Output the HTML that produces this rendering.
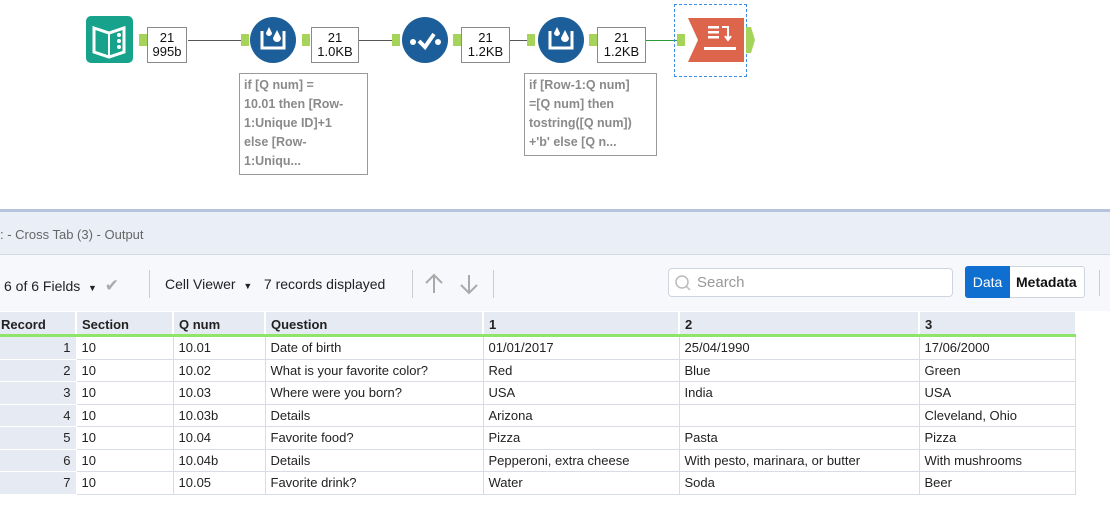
<!DOCTYPE html><html><head><style>
body{margin:0;width:1110px;height:520px;overflow:hidden;background:#fff;font-family:"Liberation Sans",sans-serif;position:relative}
.a{position:absolute}
.box{position:absolute;border:1px solid #8a8a8a;background:#fff;font-size:13px;line-height:14px;text-align:center;color:#111}
.ann{position:absolute;border:1px solid #999;background:#fff;color:#8a8a8a;font-size:12.5px;line-height:19px;padding:2px 4px;box-sizing:border-box;font-weight:bold}
.cn{position:absolute;width:8px;height:12px;background:#a6d35a}
.ln{position:absolute;height:1px;background:#555}
table{border-collapse:collapse;font-size:13px;color:#222;font-family:"Liberation Sans",sans-serif}
td{border:1px solid #d7dce5;height:21.5px;padding:0 5px;white-space:nowrap;overflow:hidden}
th{background:#e6ebf3;text-align:left;font-weight:bold;border-bottom:3px solid #8fe46a;border-left:2px solid #fff;height:20px;padding:2px 5px 0}
td.r{background:#e6ebf3;text-align:right;border-color:#fff}
</style></head><body>
<svg class="a" style="left:86px;top:16px" width="50" height="48" viewBox="0 0 50 48"><rect x="0" y="0" width="47" height="47" rx="5" fill="#17a38b"/><path d="M8 12 L23 17 L38 12 L38 36 L23 41 L8 36Z" fill="none" stroke="#fff" stroke-width="3"/><line x1="23" y1="17" x2="23" y2="40" stroke="#fff" stroke-width="2"/><circle cx="33" cy="19" r="2" fill="#fff"/><circle cx="33" cy="25" r="2" fill="#fff"/><circle cx="33" cy="31" r="2" fill="#fff"/></svg>
<div class="cn" style="left:139px;top:34px"></div>
<div class="box" style="left:147px;top:27px;width:40px;height:36px;padding-top:3px;box-sizing:border-box">21<br>995b</div>
<div class="ln" style="left:188px;top:40px;width:56px"></div>
<div class="cn" style="left:241px;top:34px"></div>
<svg class="a" style="left:249px;top:16px" width="48" height="48"><circle cx="24" cy="24" r="23" fill="#1c5e99"/><path d="M13 15 V32 H35 V15" fill="none" stroke="#fff" stroke-width="3"/><path d="M20 11 L23 17 A3 3 0 1 1 17 17Z M28 14 L32 22 A4 4 0 1 1 24 22Z" fill="#fff"/></svg>
<div class="cn" style="left:302px;top:34px"></div>
<div class="box" style="left:311px;top:27px;width:48px;height:36px;padding-top:3px;box-sizing:border-box">21<br>1.0KB</div>
<div class="ln" style="left:359px;top:40px;width:36px"></div>
<div class="cn" style="left:392px;top:34px"></div>
<svg class="a" style="left:401px;top:16px" width="48" height="48"><circle cx="24" cy="24" r="23" fill="#1c5e99"/><circle cx="12" cy="26" r="3" fill="#fff"/><circle cx="37" cy="26" r="3" fill="#fff"/><path d="M18 25 L24 31 L33 18" fill="none" stroke="#fff" stroke-width="4"/></svg>
<div class="cn" style="left:453px;top:34px"></div>
<div class="box" style="left:461px;top:27px;width:49px;height:36px;padding-top:3px;box-sizing:border-box">21<br>1.2KB</div>
<div class="ln" style="left:510px;top:40px;width:20px"></div>
<div class="cn" style="left:527px;top:34px"></div>
<svg class="a" style="left:537px;top:16px" width="48" height="48"><circle cx="24" cy="24" r="23" fill="#1c5e99"/><path d="M13 15 V32 H35 V15" fill="none" stroke="#fff" stroke-width="3"/><path d="M20 11 L23 17 A3 3 0 1 1 17 17Z M28 14 L32 22 A4 4 0 1 1 24 22Z" fill="#fff"/></svg>
<div class="cn" style="left:589px;top:34px"></div>
<div class="box" style="left:597px;top:27px;width:49px;height:36px;padding-top:3px;box-sizing:border-box">21<br>1.2KB</div>
<div class="ln" style="left:646px;top:40px;width:33px;background:#2a9a3a"></div>
<div class="a" style="left:674px;top:4px;width:73px;height:73px;border:1px dashed #3d8de0;box-sizing:border-box"></div>
<div class="cn" style="left:677px;top:34px"></div>
<svg class="a" style="left:686px;top:17px" width="70" height="46"><path d="M2 1 H58 V45 H2 L12 23Z" fill="#dd654b"/><rect x="22" y="9" width="11" height="2.5" fill="#fff"/><rect x="22" y="14" width="11" height="2.5" fill="#fff"/><rect x="22" y="19" width="11" height="2.5" fill="#fff"/><path d="M36 10 H42 V22 M39 19 l3 4 3-4" fill="none" stroke="#fff" stroke-width="2"/><rect x="18" y="30" width="32" height="3" fill="#fff"/><path d="M60 10 H65 L69 23 L65 36 H60Z" fill="#a6d35a"/></svg>
<div class="ann" style="left:239px;top:73px;width:129px;height:102px">if [Q num] =<br>10.01 then [Row-<br>1:Unique ID]+1<br>else [Row-<br>1:Uniqu...</div>
<div class="ann" style="left:524px;top:73px;width:133px;height:83px">if [Row-1:Q num]<br>=[Q num] then<br>tostring([Q num])<br>+'b' else [Q n...</div>
<div class="a" style="left:0;top:209px;width:1110px;height:3px;background:#b6c3dd"></div>
<div class="a" style="left:0;top:212px;width:1110px;height:43px;background:#eaeef6;border-bottom:1px solid #d4d9e3;box-sizing:border-box"></div>
<div class="a" style="left:0;top:227px;font-size:13px;color:#666">: - Cross Tab (3) - Output</div>
<div class="a" style="left:0;top:255px;width:1110px;height:56px;background:#f6f8fc"></div>
<div class="a" style="left:4px;top:276px;font-size:14px;color:#222">6 of 6 Fields &nbsp;<span style="font-size:9px">▼</span> &nbsp;<span style="color:#aaa;font-size:17px">✔</span></div>
<div class="a" style="left:149px;top:270px;width:1px;height:28px;background:#ccc"></div>
<div class="a" style="left:165px;top:276px;font-size:14px;color:#222">Cell Viewer &nbsp;<span style="font-size:9px">▼</span>&nbsp;&nbsp; 7 records displayed</div>
<div class="a" style="left:412px;top:270px;width:1px;height:28px;background:#ccc"></div>
<svg class="a" style="left:423px;top:273px" width="60" height="22"><path d="M11 20V3M3 10l8-8 8 8M46 2v17M38 12l8 8 8-8" fill="none" stroke="#aaa" stroke-width="2"/></svg>
<div class="a" style="left:493px;top:270px;width:1px;height:28px;background:#ccc"></div>
<div class="a" style="left:668px;top:268px;width:285px;height:29px;border:1px solid #cfd5df;border-radius:4px;background:#fff;box-sizing:border-box"></div>
<svg class="a" style="left:674px;top:274px" width="18" height="18"><circle cx="8" cy="8" r="6" fill="none" stroke="#bbb" stroke-width="1.5"/><path d="M12 12l4 4" stroke="#bbb" stroke-width="1.5"/></svg>
<div class="a" style="left:697px;top:274px;font-size:15px;color:#999">Search</div>
<div class="a" style="left:965px;top:266px;width:120px;height:32px;border:1px solid #cfd5df;border-radius:3px;background:#fff;box-sizing:border-box"></div>
<div class="a" style="left:965px;top:266px;width:45px;height:32px;background:#0e6fd0;border-radius:3px 0 0 3px;color:#fff;font-size:14px;line-height:32px;text-align:center">Data</div>
<div class="a" style="left:1016px;top:266px;font-size:14px;line-height:32px;color:#111;font-weight:bold">Metadata</div>
<div class="a" style="left:1099px;top:270px;width:1px;height:26px;background:#ccc"></div>
<table class="a" style="left:-6px;top:312px;table-layout:fixed;width:1080px">
<colgroup><col style="width:81px"><col style="width:97px"><col style="width:92px"><col style="width:218px"><col style="width:196px"><col style="width:240px"><col style="width:156px"></colgroup>
<tr><th>Record</th><th>Section</th><th>Q num</th><th>Question</th><th>1</th><th>2</th><th>3</th></tr>
<tr><td class="r">1</td><td>10</td><td>10.01</td><td>Date of birth</td><td>01/01/2017</td><td>25/04/1990</td><td>17/06/2000</td></tr>
<tr><td class="r">2</td><td>10</td><td>10.02</td><td>What is your favorite color?</td><td>Red</td><td>Blue</td><td>Green</td></tr>
<tr><td class="r">3</td><td>10</td><td>10.03</td><td>Where were you born?</td><td>USA</td><td>India</td><td>USA</td></tr>
<tr><td class="r">4</td><td>10</td><td>10.03b</td><td>Details</td><td>Arizona</td><td></td><td>Cleveland, Ohio</td></tr>
<tr><td class="r">5</td><td>10</td><td>10.04</td><td>Favorite food?</td><td>Pizza</td><td>Pasta</td><td>Pizza</td></tr>
<tr><td class="r">6</td><td>10</td><td>10.04b</td><td>Details</td><td>Pepperoni, extra cheese</td><td>With pesto, marinara, or butter</td><td>With mushrooms</td></tr>
<tr><td class="r">7</td><td>10</td><td>10.05</td><td>Favorite drink?</td><td>Water</td><td>Soda</td><td>Beer</td></tr>
</table>
</body></html>
